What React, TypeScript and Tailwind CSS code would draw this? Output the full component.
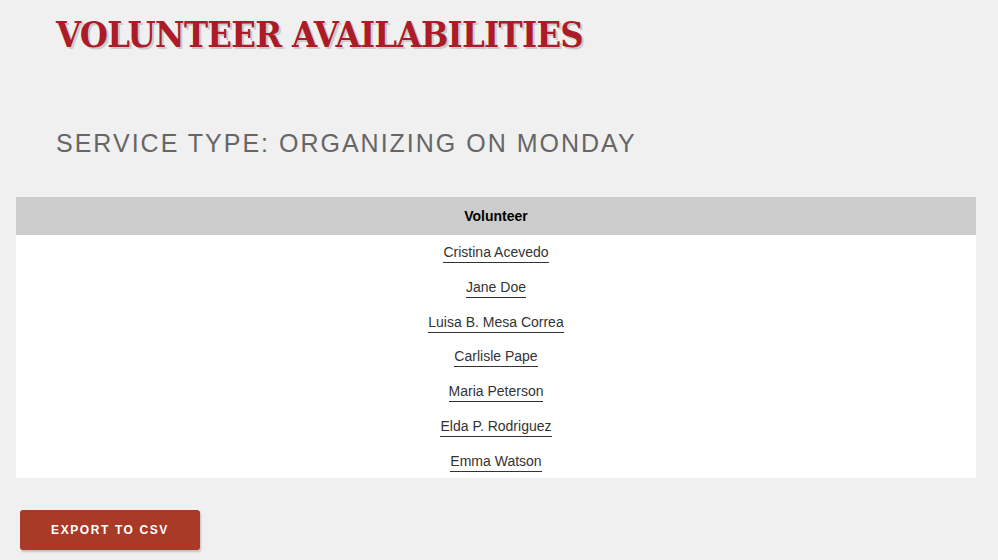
import React from "react";

const names = [
  "Cristina Acevedo",
  "Jane Doe",
  "Luisa B. Mesa Correa",
  "Carlisle Pape",
  "Maria Peterson",
  "Elda P. Rodriguez",
  "Emma Watson",
];

export default function App() {
  return (
    <div className="min-h-[560px] bg-[#f0f0f0] font-['Liberation_Sans']">
      <div className="px-[56px] pt-[10px]">
        <h1 className="font-['DejaVu_Serif_Condensed'] font-bold text-[36px] leading-[48px] tracking-[-0.7px] text-[#ab1b28] whitespace-nowrap [text-shadow:2px_2px_0_#cccccc]">
          VOLUNTEER AVAILABILITIES
        </h1>
        <h2 className="mt-[70px] text-[25px] leading-[30px] tracking-[2px] text-[#666666]">
          SERVICE TYPE: ORGANIZING ON MONDAY
        </h2>
      </div>
      <div className="ml-[16px] mr-[22px] mt-[39px] bg-white">
        <div className="h-[38px] bg-[#cccccc] flex items-center justify-center text-[14px] font-bold text-black">
          Volunteer
        </div>
        <div className="flex flex-col items-center gap-[15.8px] pt-[9px] pb-[6px]">
          {names.map((n) => (
            <span
              key={n}
              className="text-[14px] leading-[16px] text-[#333333] border-b border-[#333333] pb-[2px]"
            >
              {n}
            </span>
          ))}
        </div>
      </div>
      <div className="px-[20px] pt-[32px]">
        <button className="w-[180px] h-[40px] rounded-[3px] bg-[#a93a27] text-white text-[12px] font-bold tracking-[1.6px] shadow-[1px_2px_2px_rgba(0,0,0,0.2)]">
          EXPORT TO CSV
        </button>
      </div>
    </div>
  );
}
